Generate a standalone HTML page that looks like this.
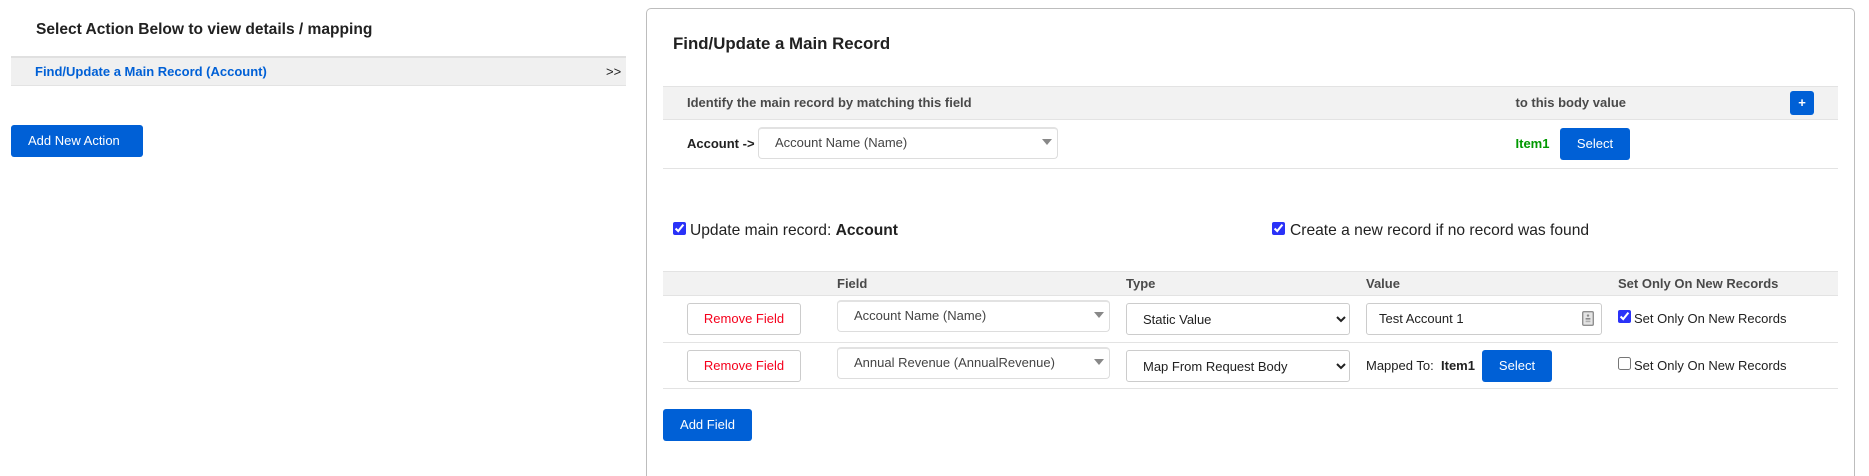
<!DOCTYPE html>
<html><head><meta charset="utf-8">
<style>
html,body{margin:0;padding:0;background:#fff;width:1869px;height:476px;overflow:hidden;font-family:"Liberation Sans",sans-serif;color:#212121}
#w{position:absolute;left:0;top:0;width:1869px;height:476px;overflow:hidden}
.a{position:absolute;white-space:nowrap}
.t{position:absolute;white-space:nowrap;font-size:13px;line-height:20px;height:20px}
.b{font-weight:bold}
.btn{position:absolute;background:#0060d6;color:#fff;font-size:13px;text-align:center;border-radius:3px;box-sizing:border-box}
.rm{position:absolute;box-sizing:border-box;border:1px solid #ccc;border-radius:3px;color:#f5001c;font-size:13px;text-align:center;background:#fff;width:114px;height:32px;line-height:30px;left:687px}
.sel{position:absolute;box-sizing:border-box;border:1px solid #ddd;border-top:2px solid #e2e2e2;border-radius:4px;background:#fff;color:#444;font-size:13px}
.sel span{position:absolute;top:4px;left:16px;line-height:20px}
.sel i{position:absolute;width:0;height:0;border-left:5px solid transparent;border-right:5px solid transparent;border-top:6px solid #888;right:5px;top:10px}
select{position:absolute;box-sizing:border-box;border:1px solid #ccc;border-radius:3px;background:#fff;color:#212121;font:13px "Liberation Sans",sans-serif;padding-left:12px;margin:0;height:32px;left:1126px;width:224px}
.hd{position:absolute;background:#f2f2f2;border-top:1px solid #e3e3e3;border-bottom:1px solid #e3e3e3;box-sizing:border-box;left:663px;width:1175px}
.ln{position:absolute;height:1px;background:#e3e3e3;left:663px;width:1175px}
.gh{color:#4a4a4a;font-weight:bold}
input[type=checkbox]{position:absolute;margin:0;width:13px;height:13px;accent-color:#2a32f8}
</style></head><body>
<div id="w">
<div class="a b" style="left:36px;top:20px;font-size:15.55px;line-height:20px">Select Action Below to view details / mapping</div>
<div class="a" style="left:11px;top:56px;width:615px;height:30px;box-sizing:border-box;background:#f0f0f0;border-top:2px solid #e0e0e0;border-bottom:1px solid #e3e3e3"></div>
<div class="t b" style="left:35px;top:62px;color:#0060d6">Find/Update a Main Record (Account)</div>
<div class="t" style="left:606px;top:62px">&gt;&gt;</div>
<div class="btn" style="left:11px;top:125px;width:132px;height:32px;line-height:32px;text-align:left;padding-left:17px">Add New Action</div>

<div class="a" style="left:646px;top:8px;width:1209px;height:468px;box-sizing:border-box;border:1px solid #bdbdbd;border-bottom:none;border-radius:5px 5px 0 0"></div>
<div class="a b" style="left:673px;top:34px;font-size:16.85px;line-height:20px">Find/Update a Main Record</div>

<div class="hd" style="top:86px;height:34px"></div>
<div class="t gh" style="left:687px;top:93px">Identify the main record by matching this field</div>
<div class="t gh" style="left:1515.5px;top:93px">to this body value</div>
<div class="btn b" style="left:1790px;top:91px;width:24px;height:24px;line-height:23px">+</div>

<div class="t b" style="left:687px;top:134px">Account -&gt;</div>
<div class="sel" style="left:758px;top:127px;width:300px;height:32px"><span>Account Name (Name)</span><i></i></div>
<div class="t b" style="left:1515.5px;top:134px;color:#090">Item1</div>
<div class="btn" style="left:1560px;top:128px;width:70px;height:32px;line-height:32px">Select</div>
<div class="ln" style="top:168px"></div>

<input type="checkbox" checked style="left:673px;top:222px">
<div class="a" style="left:690px;top:221px;font-size:15.6px;line-height:20px">Update main record: <b>Account</b></div>
<input type="checkbox" checked style="left:1272px;top:222px">
<div class="a" style="left:1290px;top:221px;font-size:15.6px;line-height:20px">Create a new record if no record was found</div>

<div class="hd" style="top:271px;height:25px"></div>
<div class="t gh" style="left:837px;top:274px">Field</div>
<div class="t gh" style="left:1126px;top:274px">Type</div>
<div class="t gh" style="left:1366px;top:274px">Value</div>
<div class="t gh" style="left:1618px;top:274px">Set Only On New Records</div>

<div class="rm" style="top:303px">Remove Field</div>
<div class="sel" style="left:837px;top:300px;width:273px;height:32px"><span>Account Name (Name)</span><i></i></div>
<select style="top:303px"><option>Static Value</option></select>
<div class="a" style="left:1366px;top:303px;width:236px;height:32px;box-sizing:border-box;border:1px solid #ccc;border-radius:3px;background:#fff"></div>
<div class="t" style="left:1379px;top:309px">Test Account 1</div>
<svg class="a" style="left:1582px;top:311px" width="12" height="15" viewBox="0 0 12 15"><rect x="0.7" y="0.7" width="10.6" height="13.6" rx="1.2" fill="#e4e4e4" stroke="#8f8f8f" stroke-width="1.4"/><circle cx="6" cy="4.6" r="1.2" fill="#8a8a8a"/><rect x="3.6" y="7" width="4.8" height="1.6" fill="#8a8a8a"/><rect x="3.6" y="9.6" width="4.8" height="1.6" fill="#b0b0b0"/></svg>
<input type="checkbox" checked style="left:1618px;top:310px">
<div class="t" style="left:1634px;top:309px">Set Only On New Records</div>
<div class="ln" style="top:342px"></div>

<div class="rm" style="top:350px">Remove Field</div>
<div class="sel" style="left:837px;top:347px;width:273px;height:32px"><span>Annual Revenue (AnnualRevenue)</span><i></i></div>
<select style="top:350px"><option>Map From Request Body</option></select>
<div class="t" style="left:1366px;top:356px">Mapped To:</div>
<div class="t b" style="left:1441px;top:356px">Item1</div>
<div class="btn" style="left:1482px;top:350px;width:70px;height:32px;line-height:32px">Select</div>
<input type="checkbox" style="left:1618px;top:357px">
<div class="t" style="left:1634px;top:356px">Set Only On New Records</div>
<div class="ln" style="top:388px"></div>

<div class="btn" style="left:663px;top:409px;width:89px;height:32px;line-height:32px">Add Field</div>
</div>
</body></html>
